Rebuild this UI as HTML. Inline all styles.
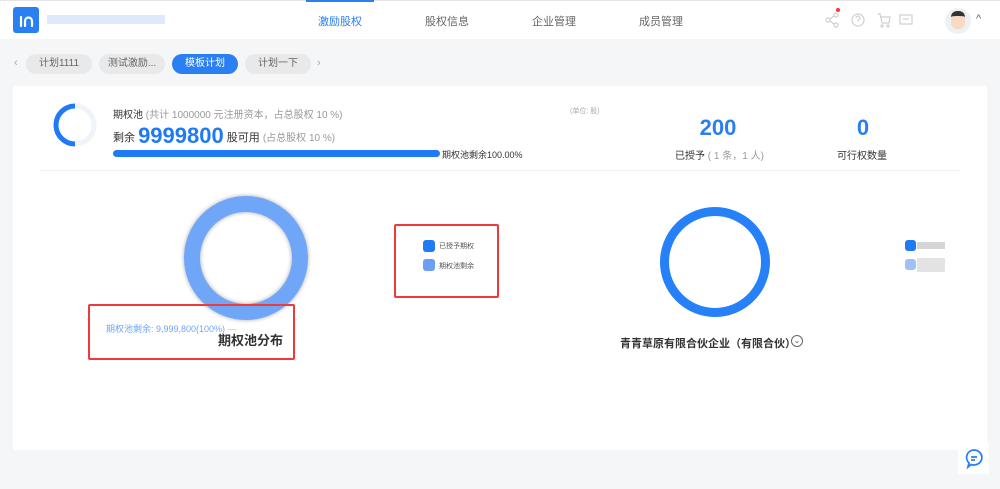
<!DOCTYPE html>
<html><head><meta charset="utf-8"><style>
*{margin:0;padding:0;box-sizing:border-box}
body{width:1000px;height:489px;background:#f5f6f8;font-family:"Liberation Sans","Noto Sans CJK SC",sans-serif;position:relative;overflow:hidden;color:#333}
.a{position:absolute}
.hdr{left:0;top:0;width:1000px;height:39px;background:#fff;border-top:1px solid #e5e5e5}
.nav{font-size:11px;color:#666;top:13px}
.tab{top:54px;height:20px;border-radius:10px;background:#e9e9ea;font-size:10px;color:#666;text-align:center;line-height:20px}
.card{left:13px;top:86px;width:974px;height:364px;background:#fff}
.sq{width:12px;height:12px;border-radius:3px}
</style></head><body>
<div class="a hdr"></div>
<div class="a" style="left:306px;top:0;width:68px;height:2px;background:#2a7ff3"></div>
<div class="a" style="left:13px;top:7px;width:26px;height:26px;background:#2a7ff3;border-radius:3px"></div>
<svg class="a" style="left:13px;top:7px" width="26" height="26"><path d="M8 10v9M12 19v-5a3.5 3.5 0 0 1 7 0v5" stroke="#fff" stroke-width="2.2" fill="none" stroke-linecap="round"/></svg>
<div class="a" style="left:47px;top:15px;width:118px;height:9px;background:#d6e3fb;opacity:.8"></div>
<div class="a nav" style="left:318px;color:#2a7ff3">激励股权</div>
<div class="a nav" style="left:425px">股权信息</div>
<div class="a nav" style="left:532px">企业管理</div>
<div class="a nav" style="left:639px">成员管理</div>
<svg class="a" style="left:822px;top:8px" width="100" height="24" fill="none" stroke="#cfcfcf" stroke-width="1.2">
<circle cx="16" cy="2" r="2" fill="#f33" stroke="none"/>
<circle cx="6" cy="12" r="2"/><circle cx="14" cy="7" r="2"/><circle cx="14" cy="17" r="2"/><path d="M8 11l4-3M8 13l4 3"/>
<circle cx="36" cy="12" r="6"/><path d="M34 10a2 2 0 1 1 2 2v1.5"/>
<path d="M56 6h2l2 9h7l1-6h-9"/><circle cx="60" cy="18" r="1"/><circle cx="66" cy="18" r="1"/>
<rect x="78" y="7" width="12" height="9"/><path d="M81 11h6"/>
</svg>
<div class="a" style="left:945px;top:8px;width:26px;height:26px;border-radius:50%;background:#eef1f4"></div>
<div class="a" style="left:951px;top:11px;width:14px;height:18px;border-radius:6px;background:#f8d9c4;border-top:5px solid #333"></div>
<div class="a" style="left:976px;top:13px;font-size:11px;color:#666">^</div>
<div class="a" style="left:14px;top:57px;font-size:11px;color:#aaa">‹</div>
<div class="a tab" style="left:26px;width:66px">计划1111</div>
<div class="a tab" style="left:99px;width:66px">测试激励...</div>
<div class="a tab" style="left:172px;width:66px;background:#2a7ff3;color:#fff">模板计划</div>
<div class="a tab" style="left:245px;width:66px">计划一下</div>
<div class="a" style="left:317px;top:57px;font-size:11px;color:#aaa">›</div>
<div class="a card"></div>
<svg class="a" style="left:52px;top:102px" width="46" height="46"><circle cx="23" cy="23" r="19" fill="none" stroke="#f0f3f7" stroke-width="5"/><path d="M23 4A19 19 0 0 0 23 42" fill="none" stroke="#1e7bf5" stroke-width="5"/></svg>
<div class="a" style="left:113px;top:106px;font-size:10px;color:#333">期权池 <span style="color:#999">(共计 1000000 元注册资本，占总股权 10 %)</span></div>
<div class="a" style="left:113px;top:123px;font-size:11px;color:#333">剩余 <span style="font-size:22px;color:#1e7bf5;font-weight:bold;vertical-align:-2px">9999800</span> 股可用 <span style="color:#999;font-size:10px">(占总股权 10 %)</span></div>
<div class="a" style="left:113px;top:150px;width:327px;height:7px;border-radius:4px;background:#1e7bf5"></div>
<div class="a" style="left:442px;top:148px;font-size:9px;color:#333">期权池剩余100.00%</div>
<div class="a" style="left:570px;top:106px;font-size:7px;color:#aaa">(单位: 股)</div>
<div class="a" style="left:680px;top:115px;width:76px;text-align:center;font-size:22px;font-weight:bold;color:#2a7ff3">200</div>
<div class="a" style="left:675px;top:147px;font-size:10px;color:#333">已授予 <span style="color:#999">( 1 条，1 人)</span></div>
<div class="a" style="left:848px;top:115px;width:30px;text-align:center;font-size:22px;font-weight:bold;color:#2a7ff3">0</div>
<div class="a" style="left:837px;top:147px;font-size:10px;color:#333">可行权数量</div>
<div class="a" style="left:40px;top:170px;width:920px;height:1px;background:#f0f0f0"></div>
<div class="a" style="left:184px;top:196px;width:124px;height:124px;border-radius:50%;border:16px solid #6fa6f8;box-shadow:0 0 4px rgba(0,0,0,.35),inset 0 0 4px rgba(0,0,0,.35)"></div>
<div class="a" style="left:88px;top:304px;width:207px;height:56px;border:2px solid #f03a3a;border-radius:2px"></div>
<div class="a" style="left:106px;top:322px;font-size:9px;color:#6fa6f8">期权池剩余: 9,999,800(100%) <span style="color:#bbb">—</span></div>
<div class="a" style="left:218px;top:330px;font-size:13px;font-weight:bold;color:#333">期权池分布</div>
<div class="a" style="left:394px;top:224px;width:105px;height:74px;border:2px solid #f03a3a;border-radius:2px"></div>
<div class="a sq" style="left:423px;top:240px;background:#1e7bf5"></div>
<div class="a" style="left:439px;top:241px;font-size:7px;color:#555">已授予期权</div>
<div class="a sq" style="left:423px;top:259px;background:#6c9ef6"></div>
<div class="a" style="left:439px;top:261px;font-size:7px;color:#555">期权池剩余</div>
<div class="a" style="left:660px;top:207px;width:110px;height:110px;border-radius:50%;border:9px solid #2680f8"></div>
<div class="a" style="left:620px;top:335px;font-size:11px;font-weight:bold;color:#333">青青草原有限合伙企业（有限合伙）</div>
<div class="a" style="left:791px;top:335px;width:12px;height:12px;border-radius:50%;border:1px solid #666;font-size:8px;line-height:9px;text-align:center;color:#666">⌄</div>
<div class="a sq" style="left:905px;top:240px;background:#1e7bf5;width:11px;height:11px"></div>
<div class="a" style="left:917px;top:242px;width:28px;height:7px;background:#d6d6d6"></div>
<div class="a sq" style="left:905px;top:259px;background:#9fc0fa;width:11px;height:11px"></div>
<div class="a" style="left:917px;top:258px;width:28px;height:14px;background:#e3e3e3"></div>
<div class="a" style="left:958px;top:443px;width:31px;height:31px;background:#fff"></div>
<svg class="a" style="left:962px;top:447px" width="24" height="24" fill="none" stroke="#2a7ff3" stroke-width="1.8"><path d="M12 3a8 7.5 0 1 1-3 14.5L6 20l1-4A7.5 7.5 0 0 1 12 3z"/><path d="M9 10h6M9 13h4"/></svg>
</body></html>
